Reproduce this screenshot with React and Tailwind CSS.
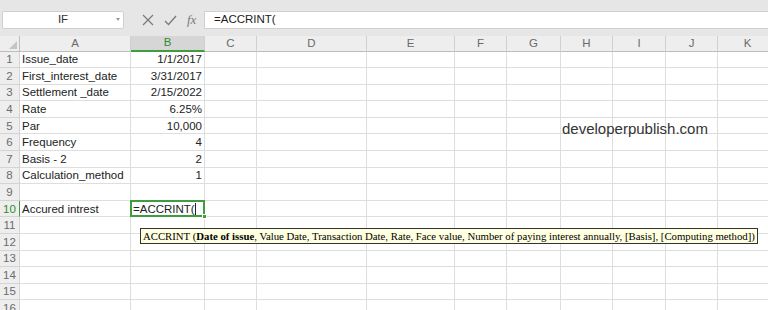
import React from "react";

const cols = [
  { k: "A", w: 111 },
  { k: "B", w: 74 },
  { k: "C", w: 52 },
  { k: "D", w: 110 },
  { k: "E", w: 88 },
  { k: "F", w: 52 },
  { k: "G", w: 54 },
  { k: "H", w: 52 },
  { k: "I", w: 53 },
  { k: "J", w: 52 },
  { k: "K", w: 60 },
];

const data = {
  1: ["Issue_date", "1/1/2017"],
  2: ["First_interest_date", "3/31/2017"],
  3: ["Settlement _date", "2/15/2022"],
  4: ["Rate", "6.25%"],
  5: ["Par", "10,000"],
  6: ["Frequency", "4"],
  7: ["Basis - 2", "2"],
  8: ["Calculation_method", "1"],
  10: ["Accured intrest", ""],
};

const font = { fontFamily: '"Liberation Sans", Arial, sans-serif' };

function Row({ n }) {
  const d = data[n] || ["", ""];
  const sel = n === 10;
  return (
    <div className="flex h-[16.6px]">
      <div
        className={`w-[20px] shrink-0 bg-[#eeeeee] border-b border-r border-[#d4d4d4] flex items-center justify-center pt-[1px] text-[11.5px] ${
          sel ? "text-[#2e8b2e] border-r-[#3f9c3f] bg-[#dcdcdc]" : "text-[#6b6b6b]"
        }`}
      >
        {n}
      </div>
      {cols.map((c, i) => (
        <div
          key={c.k}
          style={{ width: c.w }}
          className={`shrink-0 relative border-b border-r border-[#dedede] bg-white flex items-center pt-[1px] text-[11.5px] text-[#222] whitespace-nowrap ${
            i === 1 ? "justify-end pr-[2px]" : "pl-[2px]"
          }`}
        >
          {i === 0 && d[0]}
          {i === 1 && !sel && d[1]}
          {i === 1 && sel && (
            <div className="absolute left-[-1px] top-[-1px] right-[-1px] bottom-[-1px] border-2 border-[#3f9c3f] z-10 flex items-center pl-[1px] pt-[1px]">
              <span>=ACCRINT(</span>
              <span className="inline-block w-px h-[12px] bg-[#222]"></span>
              <div className="absolute right-[-4px] bottom-[-4px] w-[5px] h-[5px] bg-[#3f9c3f] border border-white"></div>
            </div>
          )}
          {c.k === "H" && n === 5 && (
            <span className="absolute left-[1px] top-[0px] text-[15px] text-[#333] z-10">
              developerpublish.com
            </span>
          )}
        </div>
      ))}
    </div>
  );
}

export default function App() {
  const rows = Array.from({ length: 16 }, (_, i) => i + 1);
  return (
    <div className="w-[768px] h-[310px] overflow-hidden bg-white relative" style={font}>
      {/* formula bar area */}
      <div className="h-[36px] bg-[#e6e6e6] flex items-center pt-[4px] pl-[2px]">
        <div className="w-[122px] h-[18px] bg-white border border-[#d0d0d0] rounded-[2px] relative flex items-center justify-center text-[11.5px] text-[#333]">
          IF
          <span className="absolute right-[3px] top-[6px] w-0 h-0 border-l-[2.5px] border-r-[2.5px] border-t-[3px] border-l-transparent border-r-transparent border-t-[#999]"></span>
        </div>
        <div className="w-[80px] flex items-center pl-[18px] gap-[10px] text-[#7a7a7a]">
          <svg width="12" height="12" viewBox="0 0 12 12" fill="none" stroke="#7a7a7a" strokeWidth="1.2">
            <path d="M1 1 L11 11 M11 1 L1 11" />
          </svg>
          <svg width="13" height="11" viewBox="0 0 13 11" fill="none" stroke="#7a7a7a" strokeWidth="1.3">
            <path d="M1 6 L4.5 9.5 L12 1" />
          </svg>
          <span className="text-[13px] italic text-[#7a7a7a]" style={{ fontFamily: '"Liberation Serif", serif' }}>
            fx
          </span>
        </div>
        <div className="flex-1 h-[18px] bg-white border border-[#d0d0d0] border-r-0 flex items-center pl-[9px] text-[11.5px] text-[#222]">
          =ACCRINT(
        </div>
      </div>
      {/* column headers */}
      <div className="flex h-[15.5px] bg-[#eeeeee]">
        <div className="w-[20px] shrink-0 border-r border-b border-[#bdbdbd] relative">
          <svg className="absolute right-[2px] bottom-[2px]" width="8" height="8" viewBox="0 0 8 8">
            <path d="M8 0 L8 8 L0 8 Z" fill="#c4c4c4" />
          </svg>
        </div>
        {cols.map((c) => (
          <div
            key={c.k}
            style={{ width: c.w }}
            className={`shrink-0 flex items-center justify-center text-[11.5px] border-r border-[#d0d0d0] ${
              c.k === "B"
                ? "bg-[#d6d6d6] text-[#2e8b2e] border-b-2 border-b-[#3f9c3f]"
                : "text-[#6b6b6b] border-b border-b-[#bdbdbd]"
            }`}
          >
            {c.k}
          </div>
        ))}
      </div>
      {rows.map((n) => (
        <Row key={n} n={n} />
      ))}
      {/* tooltip */}
      <div
        className="absolute left-[140px] top-[228px] h-[16px] bg-[#ffffe1] border border-[#333] flex items-center px-[2px] text-[10.75px] text-black whitespace-nowrap z-20"
        style={{ fontFamily: '"Liberation Serif", "Times New Roman", serif' }}
      >
        ACCRINT (<b>Date of issue</b>, Value Date, Transaction Date, Rate, Face value, Number of paying interest annually, [Basis], [Computing method])
      </div>
    </div>
  );
}
